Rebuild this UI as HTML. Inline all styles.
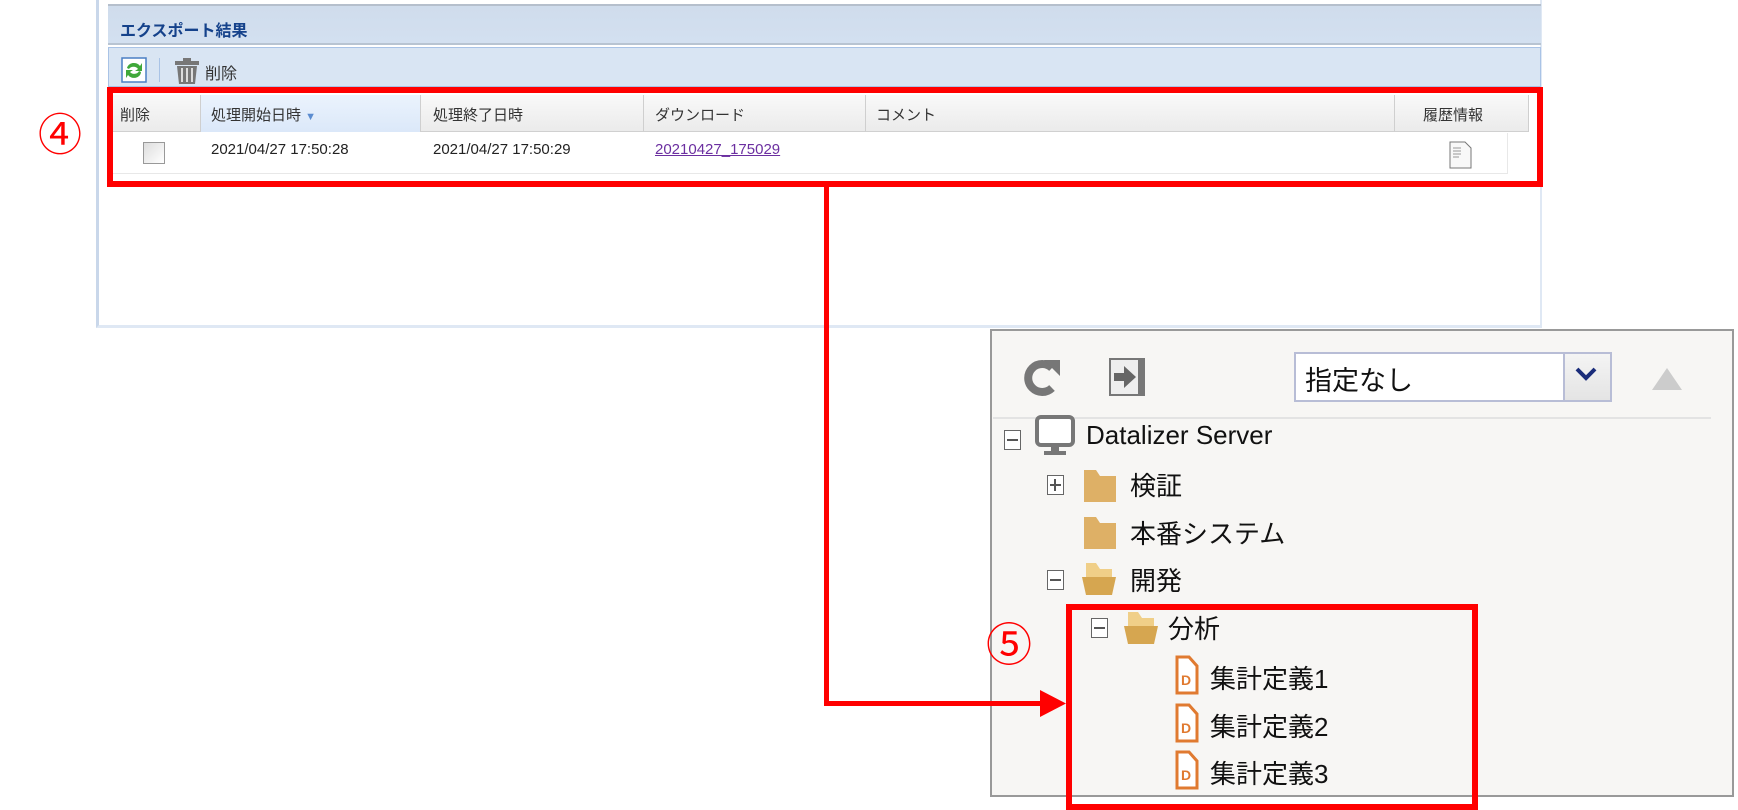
<!DOCTYPE html>
<html><head><meta charset="utf-8"><style>
*{margin:0;padding:0;box-sizing:border-box}
body{width:1738px;height:810px;background:#fff;position:relative;overflow:hidden;font-family:"Liberation Sans","Noto Sans CJK JP",sans-serif;color:#222}
.a{position:absolute}
.t{font-size:15px;white-space:nowrap}
.tr{font-size:26px;white-space:nowrap;color:#111}
</style></head><body>
<!-- left panel -->
<div class="a" style="left:96px;top:0;width:1446px;height:328px;border-left:3px solid #c9d7ea;border-right:2px solid #dfe8f4;border-bottom:3px solid #dfe8f4;background:#fff"></div>
<div class="a" style="left:108px;top:4px;width:1433px;height:41px;background:linear-gradient(#cfdcec,#d3e0f0);border-top:2px solid #b5bfcc;border-bottom:2px solid #b8c4d2"></div>
<div class="a t" style="left:120px;top:17px;font-size:16px;color:#15428b;font-weight:bold">エクスポート結果</div>
<div class="a" style="left:108px;top:47px;width:1433px;height:40px;background:#d9e5f3;border:1px solid #a9c3e6"></div>
<svg class="a" style="left:121px;top:57px" width="27" height="27" viewBox="0 0 27 27"><rect x="1" y="1" width="24" height="24" fill="#fff" stroke="#4a7fc4" stroke-width="1.5"/><path d="M6 11a7 6 0 0 1 13-2l2-3v8h-7l3-2a5 4 0 0 0-9 0z" fill="#3fa83a"/><path d="M20 15a7 6 0 0 1-13 3l-2 3v-8h7l-3 2a5 4 0 0 0 9-1z" fill="#3fa83a"/></svg>
<div class="a" style="left:159px;top:58px;width:1px;height:24px;background:#a9c3e6"></div>
<svg class="a" style="left:172px;top:56px" width="30" height="30" viewBox="0 0 30 30"><rect x="11" y="2" width="8" height="3" fill="#777"/><rect x="3" y="5" width="24" height="4" fill="#777"/><path d="M5 10h20l-2 18H7z" fill="#777"/><path d="M10 12v14M15 12v14M20 12v14" stroke="#ddd" stroke-width="2"/></svg>
<div class="a t" style="left:205px;top:60px;font-size:16px;color:#333">削除</div>
<!-- header row -->
<div class="a" style="left:112px;top:95px;width:1416px;height:37px;background:linear-gradient(#f9f9f9,#ebebeb);border-bottom:1px solid #d0d0d0"></div>
<div class="a" style="left:200px;top:95px;width:221px;height:37px;background:linear-gradient(#ebf3fd,#dbe8f9);border-left:1px solid #cfcfcf;border-right:1px solid #cfcfcf"></div>
<div class="a" style="left:643px;top:95px;width:1px;height:37px;background:#cfcfcf"></div>
<div class="a" style="left:865px;top:95px;width:1px;height:37px;background:#cfcfcf"></div>
<div class="a" style="left:1394px;top:95px;width:1px;height:37px;background:#cfcfcf"></div>
<div class="a" style="left:1528px;top:95px;width:1px;height:37px;background:#cfcfcf"></div>
<div class="a t" style="left:120px;top:104px;color:#333">削除</div>
<div class="a t" style="left:211px;top:104px;color:#333">処理開始日時 <span style="color:#5b8cd0;font-size:11px">▼</span></div>
<div class="a t" style="left:433px;top:104px;color:#333">処理終了日時</div>
<div class="a t" style="left:655px;top:104px;color:#333">ダウンロード</div>
<div class="a t" style="left:876px;top:104px;color:#333">コメント</div>
<div class="a t" style="left:1423px;top:104px;color:#333">履歴情報</div>
<div class="a" style="left:112px;top:173px;width:1396px;height:1px;background:#e8e8e8"></div>
<div class="a" style="left:1507px;top:133px;width:1px;height:40px;background:#e8e8e8"></div>
<div class="a" style="left:143px;top:142px;width:22px;height:22px;border:1px solid #999;background:linear-gradient(135deg,#ddd,#fff)"></div>
<div class="a t" style="left:211px;top:141px;color:#222">2021/04/27 17:50:28</div>
<div class="a t" style="left:433px;top:141px;color:#222">2021/04/27 17:50:29</div>
<div class="a t" style="left:655px;top:141px;color:#6b2fa0;text-decoration:underline">20210427_175029</div>
<svg class="a" style="left:1449px;top:141px" width="24" height="28" viewBox="0 0 24 28"><path d="M1 1h15l6 6v20H1z" fill="#f8f8f8" stroke="#777"/><path d="M4 7h8M4 10h8M4 13h8M4 16h6" stroke="#999"/></svg>
<!-- red box 4 -->
<div class="a" style="left:107px;top:87px;width:1436px;height:100px;border:6px solid #f00"></div>
<div class="a" style="left:38px;top:112px;font-size:44px;color:#f00;line-height:48px">④</div>
<!-- right panel -->
<div class="a" style="left:990px;top:329px;width:744px;height:468px;border:2px solid #999;background:#f7f6f4"></div>
<svg class="a" style="left:1022px;top:356px" width="42" height="44" viewBox="0 0 42 44"><path d="M30 12A14 14 0 1 0 30 32" fill="none" stroke="#777" stroke-width="8"/><path d="M22 4L38 4L38 20z" fill="#777"/></svg>
<svg class="a" style="left:1108px;top:357px" width="40" height="40" viewBox="0 0 40 40"><rect x="2" y="2" width="34" height="36" fill="#eee" stroke="#777" stroke-width="2"/><rect x="30" y="2" width="6" height="36" fill="#777"/><path d="M6 16h10v-7l12 11-12 11v-7H6z" fill="#666"/></svg>
<div class="a" style="left:1294px;top:352px;width:318px;height:50px;border:2px solid #b8bdd6;background:#fff"></div>
<div class="a" style="left:1563px;top:354px;width:47px;height:46px;border-left:2px solid #b8bdd6;background:linear-gradient(#f4f4f4,#e4e4e4)"></div>
<svg class="a" style="left:1574px;top:364px" width="24" height="20"><path d="M3 5l9 9 9-9" fill="none" stroke="#1a2c7a" stroke-width="4"/></svg>
<div class="a tr" style="left:1305px;top:359px;font-size:27px">指定なし</div>
<svg class="a" style="left:1650px;top:366px" width="34" height="26"><path d="M17 2L32 24H2z" fill="#ccc"/></svg>
<div class="a" style="left:993px;top:417px;width:718px;height:2px;background:#e3e3e3"></div>
<!-- tree -->
<div class="a" style="left:1004px;top:430px;width:17px;height:20px;border:1.5px solid #666;background:#fff"></div><div class="a" style="left:1007px;top:439px;width:11px;height:2px;background:#555"></div>
<svg class="a" style="left:1035px;top:415px" width="42" height="44" viewBox="0 0 42 44"><rect x="2" y="2" width="36" height="28" rx="4" fill="#fff" stroke="#777" stroke-width="4"/><rect x="16" y="30" width="8" height="6" fill="#777"/><rect x="9" y="36" width="22" height="4" fill="#777"/></svg>
<div class="a tr" style="left:1086px;top:420px">Datalizer Server</div>
<div class="a" style="left:1047px;top:475px;width:17px;height:20px;border:1.5px solid #666;background:#fff"></div><div class="a" style="left:1050px;top:484px;width:11px;height:2px;background:#555"></div><div class="a" style="left:1054px;top:479px;width:2px;height:12px;background:#555"></div>
<svg class="a" style="left:1084px;top:470px" width="32" height="32"><path d="M0 0h12l4 6h16v26H0z" fill="#deb066"/></svg>
<div class="a tr" style="left:1130px;top:466px">検証</div>
<svg class="a" style="left:1084px;top:517px" width="32" height="32"><path d="M0 0h12l4 6h16v26H0z" fill="#deb066"/></svg>
<div class="a tr" style="left:1130px;top:514px">本番システム</div>
<div class="a" style="left:1047px;top:570px;width:17px;height:20px;border:1.5px solid #666;background:#fff"></div><div class="a" style="left:1050px;top:579px;width:11px;height:2px;background:#555"></div>
<svg class="a" style="left:1082px;top:563px" width="34" height="34"><path d="M4 0h10l4 6h12v10H4z" fill="#f0cf88"/><path d="M0 14h34l-4 18H4z" fill="#d6a650"/></svg>
<div class="a tr" style="left:1130px;top:561px">開発</div>
<div class="a" style="left:1091px;top:618px;width:17px;height:20px;border:1.5px solid #666;background:#fff"></div><div class="a" style="left:1094px;top:627px;width:11px;height:2px;background:#555"></div>
<svg class="a" style="left:1124px;top:612px" width="34" height="34"><path d="M4 0h10l4 6h12v10H4z" fill="#f0cf88"/><path d="M0 14h34l-4 18H4z" fill="#d6a650"/></svg>
<div class="a tr" style="left:1168px;top:609px">分析</div>
<svg class="a" style="left:1175px;top:655px" width="24" height="40" viewBox="0 0 24 40"><path d="M2 2h12l8 9v27H2z" fill="#fff" stroke="#e07a30" stroke-width="3"/><text x="6" y="30" font-size="14" font-family="Liberation Sans" fill="#e07a30" font-weight="bold">D</text></svg>
<div class="a tr" style="left:1210px;top:659px">集計定義1</div>
<svg class="a" style="left:1175px;top:703px" width="24" height="40" viewBox="0 0 24 40"><path d="M2 2h12l8 9v27H2z" fill="#fff" stroke="#e07a30" stroke-width="3"/><text x="6" y="30" font-size="14" font-family="Liberation Sans" fill="#e07a30" font-weight="bold">D</text></svg>
<div class="a tr" style="left:1210px;top:707px">集計定義2</div>
<svg class="a" style="left:1175px;top:750px" width="24" height="40" viewBox="0 0 24 40"><path d="M2 2h12l8 9v27H2z" fill="#fff" stroke="#e07a30" stroke-width="3"/><text x="6" y="30" font-size="14" font-family="Liberation Sans" fill="#e07a30" font-weight="bold">D</text></svg>
<div class="a tr" style="left:1210px;top:754px">集計定義3</div>
<!-- connector (on top) -->
<div class="a" style="left:824px;top:186px;width:5px;height:520px;background:#f00"></div>
<div class="a" style="left:824px;top:701px;width:220px;height:5px;background:#f00"></div>
<svg class="a" style="left:1040px;top:690px" width="28" height="27"><path d="M0 0L26 13.5L0 27z" fill="#f00"/></svg>
<div class="a" style="left:1066px;top:604px;width:412px;height:206px;border:6px solid #f00"></div>
<div class="a" style="left:986px;top:620px;font-size:46px;color:#f00;line-height:50px">⑤</div>
</body></html>
